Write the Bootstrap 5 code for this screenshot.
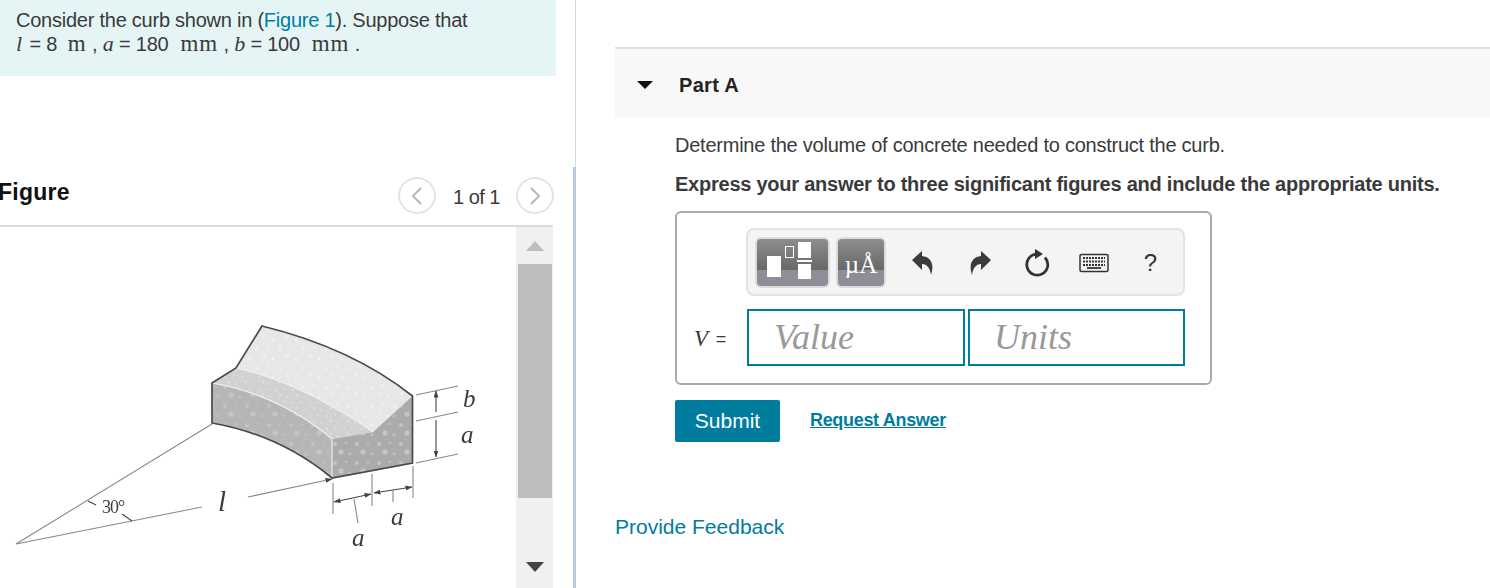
<!DOCTYPE html>
<html lang="en"><head><meta charset="utf-8"><title>Curb</title>
<link rel="stylesheet" href="https://cdn.jsdelivr.net/npm/bootstrap@5.3.0/dist/css/bootstrap.min.css">
<style>
html,body{margin:0;height:588px;overflow:hidden}
body{font-family:"Liberation Sans",Arial,sans-serif;font-size:20px;color:#3a3a3a;background:#fff;line-height:24px;letter-spacing:-.24px}
a{color:#007c9e;text-decoration:none}
.pg{width:1490px;height:588px}
.lft{width:576px;flex:none}
.lft-top{height:167px;border-right:1px solid #d9d9d9}
.prob{width:556px;height:76px;background:#e5f5f6;padding:8px 16px 0}
.mvar{font-family:"Liberation Serif",serif;font-style:italic;font-size:22px;letter-spacing:0}
.mvl{padding-right:2px}
.mu{font-family:"Liberation Serif",serif;font-size:23px;letter-spacing:1px}
.gm{margin-left:4px}
.gp{margin-left:12px}
.gq{margin-left:5px}
.fig-pane{height:421px;border-right:3px solid #b8cbe0}
.fig-head{width:553px;height:60px;border-bottom:2px solid #dcdcdc;padding-top:10px}
.fig-ttl{font-weight:700;font-size:23px;color:#111;margin-left:-2px;margin-top:3px;line-height:24px;letter-spacing:.25px}
.pgr{margin-right:-1px;color:#3a3a3a}
.circ{width:38px;height:37px;border:2px solid #e4e4e4;border-radius:50%;display:flex;align-items:center;justify-content:center}
.pgr-t{margin:8px 16px 0 17px;letter-spacing:-.5px}
.fig-body{width:553px;height:361px}
.fig-svg{width:516px;height:358px;display:block;flex:none;margin-top:3px}
.sbar{width:37px;background:#f0f0f0;padding:0 1px 0 2px}
.sb-up{height:37px}
.sb-thumb{height:234px;background:#bdbdbd}
.rgt{width:875px;margin-left:39px;padding-top:47px;flex:none}
.part{height:71px;background:#f8f8f8;border-top:2px solid #e0e0e0;padding-left:22px;padding-top:2px}
.part b{font-size:20px;color:#222;margin-left:26px;letter-spacing:.3px}
.cont{padding-left:60px;padding-top:15px}
.instr{font-weight:700;margin-top:15px;margin-bottom:15px}
.ansbox{width:537px;height:174px;border:2px solid #aaa;border-radius:6px;padding:15px 0 0 16px}
.tools{width:439px;height:68px;margin-left:53px;background:#f4f4f4;border:2px solid #e2e2e2;border-radius:8px;padding:7px 0 0 7px}
.tb{height:51px;border:2px solid #dcdcdc;border-radius:6px;background:linear-gradient(#8d8d8d,#696969 65%,#8f8d97 65%);color:#fff;overflow:hidden}
.tb1{width:75px}
.tb2{width:50px;margin-left:6px;font-family:"Liberation Serif",serif;font-size:25px;text-align:center;line-height:51px;letter-spacing:0}
.tico-row{height:51px;margin-left:8px}
.tico{width:57px;display:flex;justify-content:center;align-items:center}
.qm{font-size:24px;color:#333;letter-spacing:0}
.vrow{margin-top:13px}
.vlbl{width:54px;font-size:18px;padding-left:1px;padding-top:3px;gap:8px}
.vlbl i{font-family:"Liberation Serif",serif;font-size:23px}
.fld{width:218px;height:57px;border:2px solid #007c9e;font-family:"Liberation Serif",serif;font-style:italic;font-size:36px;padding:0 0 2px 25px;border-radius:0;color:#3a3a3a}
.fld::placeholder{color:#999;opacity:1}
.fld2{width:217px;margin-left:3px;padding-left:24px}
.sub{width:105px;height:42px;background:#007c9e;color:#fff;border:0;border-radius:2px;font-size:21px;padding:0}
.sub:hover{background:#007c9e;color:#fff}
.req{font-size:18px;font-weight:700;text-decoration:underline;margin-left:30px;margin-bottom:2px;letter-spacing:-.32px}
.acts{margin-top:15px}
.fb{margin-top:73px;margin-left:-60px;font-size:21px;letter-spacing:0}
.softg{filter:blur(.45px)}
</style></head><body>
<div class="pg d-flex">
<div class="lft">
 <div class="lft-top">
  <div class="prob">Consider the curb shown in (<a href="#">Figure 1</a>). Suppose that<br><span class="mvar mvl">l</span> = 8<span class="mu gm">&nbsp;m</span> , <span class="mvar">a</span> = 180<span class="mu gp">mm</span> , <span class="mvar">b</span> = 100<span class="mu gq">&nbsp;mm</span> .</div>
 </div>
 <div class="fig-pane">
  <div class="fig-head d-flex justify-content-between">
   <div class="fig-ttl">Figure</div>
   <div class="pgr d-flex align-items-start">
    <span class="circ"><svg width="12" height="20" viewBox="0 0 12 20"><path d="M10 2 2 10l8 8" fill="none" stroke="#bbb" stroke-width="2.2"/></svg></span>
    <span class="pgr-t">1 of 1</span>
    <span class="circ"><svg width="12" height="20" viewBox="0 0 12 20"><path d="M2 2l8 8-8 8" fill="none" stroke="#bbb" stroke-width="2.2"/></svg></span>
   </div>
  </div>
  <div class="fig-body d-flex">
   <svg class="fig-svg" viewBox="0 0 516 358" font-family="Liberation Serif,serif" font-style="italic">
    <defs>
     <pattern id="sp1" width="23" height="19" patternUnits="userSpaceOnUse"><circle cx="4" cy="5" r="1.600" fill="#f1f1f2"/><circle cx="15" cy="3" r="1" fill="#f4f4f5"/><circle cx="11" cy="12" r="2" fill="#eeeeef"/><circle cx="20" cy="15" r="1.200" fill="#f4f4f5"/></pattern>
     <pattern id="sp2" width="17" height="13" patternUnits="userSpaceOnUse"><circle cx="4" cy="4" r="1.200" fill="#dcdddf"/><circle cx="12" cy="3" r="1" fill="#dedfe0"/><circle cx="8" cy="9" r="1.500" fill="#dcdddf"/><circle cx="15" cy="11" r=".9" fill="#e0e0e2"/></pattern>
     <pattern id="sp3" width="22" height="19" patternUnits="userSpaceOnUse"><circle cx="5" cy="5" r="2" fill="#c2c3c5"/><circle cx="16" cy="4" r="1.200" fill="#c0c1c3"/><circle cx="11" cy="13" r="2.600" fill="#c4c5c7"/><circle cx="20" cy="15" r="1.400" fill="#c0c1c3"/></pattern>
     <marker id="ah" markerUnits="userSpaceOnUse" markerWidth="7" markerHeight="5" refX="6.500" refY="2.500" orient="auto-start-reverse"><path d="M0 0 7 2.500 0 5z" fill="#444"/></marker>
    </defs>
    <g class="softg">
     <path d="M262 96 236 138Q300 152 373 202L412.500 166Q352 118 262 96z" fill="#e6e7e8"/>
     <path d="M262 96 236 138Q300 152 373 202L412.500 166Q352 118 262 96z" fill="url(#sp1)"/>
     <path d="M236 138 212 153Q280 165 332 209L373 202Q300 152 236 138z" fill="#d0d1d3"/>
     <path d="M236 138 212 153Q280 165 332 209L373 202Q300 152 236 138z" fill="url(#sp2)"/>
     <path d="M212 153V193Q280 205 332 248V209Q280 165 212 153z" fill="#b5b6b8"/>
     <path d="M212 153V193Q280 205 332 248V209Q280 165 212 153z" fill="url(#sp3)"/>
     <path d="M332 209 373 202 412.500 166V233L332 248z" fill="#aaabad"/>
     <path d="M332 209 373 202 412.500 166V233L332 248z" fill="url(#sp3)"/>
     <g fill="none" stroke="#f2f2f3" stroke-width="1.100"><path d="M236 138Q300 152 373 202"/><path d="M212 153Q280 165 332 209V248"/></g>
     <g fill="none" stroke="#4a4a4a" stroke-width="1.700"><path d="M262 96 236 138 212 153V193Q280 205 332 248L412.500 233V166Q352 118 262 96z"/></g>
     <g fill="none" stroke="#888" stroke-width="1.100">
      <path d="M212 194 16 314 202 277"/>
      <path d="M248 267 332 249" marker-end="url(#ah)"/>
      <path d="M416 165 458 156M416 191 458 182M416 233 458 224"/>
      <path d="M436 161V182M436 190V227" stroke="#444" marker-start="url(#ah)" marker-end="url(#ah)"/>
      <path d="M333 253V284M372 244V276M413 236V268"/>
      <path d="M334 272 371 264" stroke="#444" marker-start="url(#ah)" marker-end="url(#ah)"/>
      <path d="M374 263 412 257" stroke="#444" marker-start="url(#ah)" marker-end="url(#ah)"/>
      <path d="M354 269 358 293M393 260V272"/>
      <path d="M88 271 96 275M122 284 132 291" stroke="#444"/>
     </g>
     <g fill="#3c3c3c" font-size="25">
      <text x="463" y="177">b</text><text x="461" y="213">a</text>
      <text x="391" y="295">a</text><text x="352" y="316">a</text>
      <text x="218" y="281" font-size="29">l</text>
      <text x="102" y="283" font-size="18" font-style="normal" letter-spacing="-1">30°</text>
     </g>
    </g>
   </svg>
   <div class="sbar d-flex flex-column">
    <div class="sb-up d-flex justify-content-center align-items-center"><svg width="18" height="10"><path d="M9 0 18 10H0z" fill="#bdbdbd"/></svg></div>
    <div class="sb-thumb"></div>
    <div class="flex-grow-1 d-flex justify-content-center align-items-end pb-3"><svg width="18" height="10"><path d="M0 0H18L9 10z" fill="#444"/></svg></div>
   </div>
  </div>
 </div>
</div>
<div class="rgt">
 <div class="part d-flex align-items-center"><svg width="16" height="8" viewBox="0 0 16 8"><path d="M0 0H16L8 8z" fill="#111"/></svg><b>Part A</b></div>
 <div class="cont">
  <div>Determine the volume of concrete needed to construct the curb.</div>
  <div class="instr">Express your answer to three significant figures and include the appropriate units.</div>
  <div class="ansbox">
   <div class="tools d-flex align-items-start">
    <div class="tb tb1"><svg width="71" height="47" viewBox="0 0 71 47"><g fill="#fff"><rect x="10" y="17" width="14" height="21"/><rect x="41" y="3" width="13" height="16"/><rect x="40" y="21" width="15" height="2"/><rect x="41" y="25" width="13" height="15"/></g><rect x="28.500" y="7.500" width="8" height="11" fill="none" stroke="#fff"/></svg></div>
    <div class="tb tb2">µÅ</div>
    <div class="d-flex tico-row">
     <span class="tico"><svg width="24" height="26" viewBox="0 0 24 26"><path d="M1 10 11 1V6C19 7 24 13 20 25 19 18 16 14 11 14V20z" fill="#3b3b3b"/></svg></span>
     <span class="tico"><svg width="24" height="26" viewBox="0 0 24 26"><path d="M23 10 13 1V6C5 7 0 13 4 25 5 18 8 14 13 14V20z" fill="#3b3b3b"/></svg></span>
     <span class="tico"><svg width="26" height="28" viewBox="0 0 26 28"><path d="M12 5.200A10.500 10.500 0 1 0 21 8.500" fill="none" stroke="#333" stroke-width="2.800"/><path d="M11 0 19 5 11 10z" fill="#333"/></svg></span>
     <span class="tico"><svg width="30" height="20" viewBox="0 0 30 20"><rect x="1" y="1.500" width="28" height="17" rx="1.500" fill="#f4f4f4" stroke="#333" stroke-width="1.500"/><path d="M4 5h22M4 8.500h22M4 12h22" stroke="#333" stroke-width="1.800" stroke-dasharray="2 1"/><path d="M8 15h14" stroke="#333" stroke-width="1.800"/></svg></span>
     <span class="tico qm">?</span>
    </div>
   </div>
   <div class="vrow d-flex">
    <div class="vlbl d-flex align-items-center"><i>V</i> =</div>
    <input class="fld form-control" placeholder="Value" aria-label="Value">
    <input class="fld fld2 form-control" placeholder="Units" aria-label="Units">
   </div>
  </div>
  <div class="acts d-flex align-items-center">
   <button class="btn sub">Submit</button><a class="req" href="#">Request Answer</a>
  </div>
  <div class="fb"><a href="#">Provide Feedback</a></div>
 </div>
</div>
</div>
</body></html>
